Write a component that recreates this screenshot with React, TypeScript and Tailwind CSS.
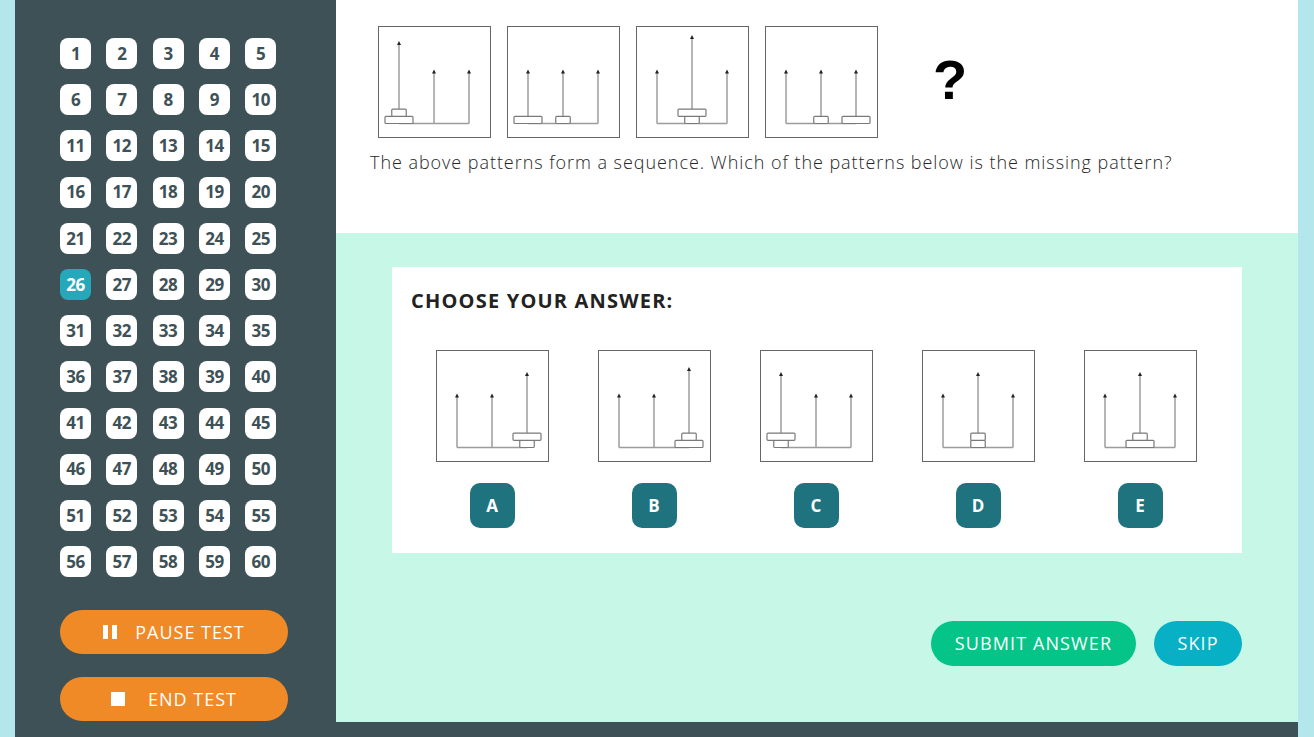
import React from 'react';

type Disk = { peg: number; big: boolean; level: number };
type Pattern = { tall: number | null; tallTop: number; disks: Disk[] };

const PEGS = [21, 56, 91];
const SHORT_TOP = 43.5;
const BASE = 97.5;

const sequence: Pattern[] = [
  { tall: 0, tallTop: 15, disks: [{ peg: 0, big: true, level: 0 }, { peg: 0, big: false, level: 1 }] },
  { tall: null, tallTop: 0, disks: [{ peg: 0, big: true, level: 0 }, { peg: 1, big: false, level: 0 }] },
  { tall: 1, tallTop: 9, disks: [{ peg: 1, big: false, level: 0 }, { peg: 1, big: true, level: 1 }] },
  { tall: null, tallTop: 0, disks: [{ peg: 1, big: false, level: 0 }, { peg: 2, big: true, level: 0 }] },
];

const answers: { label: string; pattern: Pattern }[] = [
  { label: 'A', pattern: { tall: 2, tallTop: 22, disks: [{ peg: 2, big: false, level: 0 }, { peg: 2, big: true, level: 1 }] } },
  { label: 'B', pattern: { tall: 2, tallTop: 17, disks: [{ peg: 2, big: true, level: 0 }, { peg: 2, big: false, level: 1 }] } },
  { label: 'C', pattern: { tall: 0, tallTop: 22, disks: [{ peg: 0, big: false, level: 0 }, { peg: 0, big: true, level: 1 }] } },
  { label: 'D', pattern: { tall: 1, tallTop: 22, disks: [{ peg: 1, big: false, level: 0 }, { peg: 1, big: false, level: 1 }] } },
  { label: 'E', pattern: { tall: 1, tallTop: 22, disks: [{ peg: 1, big: true, level: 0 }, { peg: 1, big: false, level: 1 }] } },
];

function PatternBox({ pattern }: { pattern: Pattern }) {
  return (
    <div className="w-[113px] h-[112px] border border-[#666] bg-white shrink-0">
      <svg width="111" height="110" viewBox="1 1 111 110">
        <line x1={PEGS[0]} y1={BASE} x2={PEGS[2]} y2={BASE} stroke="#9c9c9c" strokeWidth="1.5" />
        {PEGS.map((x, i) => {
          const top = pattern.tall === i ? pattern.tallTop : SHORT_TOP;
          return (
            <g key={i}>
              <line x1={x} y1={top + 2} x2={x} y2={BASE} stroke="#9c9c9c" strokeWidth="1.5" />
              <polygon points={`${x - 2},${top + 4} ${x},${top} ${x + 2},${top + 4}`} fill="#222" />
            </g>
          );
        })}
        {pattern.disks.map((d, i) => {
          const w = d.big ? 28 : 14.5;
          const x = PEGS[d.peg] - w / 2;
          const y = BASE - 7.2 * (d.level + 1);
          return <rect key={i} x={x} y={y} width={w} height={7.2} rx="1" fill="#fff" stroke="#7a7a7a" strokeWidth="1.2" />;
        })}
      </svg>
    </div>
  );
}

export default function App() {
  const numbers = Array.from({ length: 60 }, (_, i) => i + 1);

  return (
    <div className="w-full h-[737px] bg-[#b4e7ec] pl-[15px] pr-[16px] overflow-hidden" style={{ fontFamily: '"Open Sans", "Liberation Sans", sans-serif' }}>
      <div className="flex h-full bg-[#3e5156]">
        {/* Sidebar */}
        <aside className="w-[321px] shrink-0 pl-[45px] pt-[38px]">
          <div className="grid grid-cols-[repeat(5,31px)] gap-x-[15.3px] gap-y-[15.2px]">
            {numbers.map((n) => (
              <div
                key={n}
                className={`w-[31px] h-[31px] rounded-[8px] flex items-center justify-center text-[17px] font-bold tracking-[-0.5px] ${
                  n === 26 ? 'bg-[#25a8b9] text-white' : 'bg-white text-[#3e5156]'
                }`}
              >
                {n}
              </div>
            ))}
          </div>

          <div className="mt-[33px] flex flex-col gap-[23px]">
            <button className="w-[228px] h-[44px] rounded-full bg-[#f08a26] text-white text-[18px] tracking-[1px] flex items-center justify-center gap-[18px]">
              <span className="flex gap-[4px]">
                <span className="w-[5px] h-[14px] bg-white" />
                <span className="w-[5px] h-[14px] bg-white" />
              </span>
              PAUSE TEST
            </button>
            <button className="w-[228px] h-[44px] rounded-full bg-[#f08a26] text-white text-[18px] tracking-[1px] flex items-center justify-center gap-[23px]">
              <span className="w-[14px] h-[14px] bg-white" />
              END TEST
            </button>
          </div>
        </aside>

        {/* Main */}
        <main className="flex-1 h-[722px] flex flex-col">
          <section className="h-[233px] bg-white pl-[34px] pt-[26px]">
            <div className="flex items-center gap-[16px] ml-[8px]">
              {sequence.map((p, i) => (
                <PatternBox key={i} pattern={p} />
              ))}
              <span className="ml-[39px] -mt-[4px] text-[56px] font-bold text-black leading-none" style={{ fontFamily: '"Liberation Sans", Arial, sans-serif' }}>
                ?
              </span>
            </div>
            <p className="mt-[11px] text-[18px] tracking-[0.95px] text-[#262626] font-light">
              The above patterns form a sequence. Which of the patterns below is the missing pattern?
            </p>
          </section>

          <section className="flex-1 bg-[#c7f7e7] px-[56px] pt-[34px]">
            <div className="bg-white h-[286px] px-[19px] pt-[19px]">
              <h2 className="text-[20px] font-bold text-[#222] tracking-[1.2px]">CHOOSE YOUR ANSWER:</h2>
              <div className="mt-[34px] flex justify-center gap-[49px] -ml-[2px]">
                {answers.map((a) => (
                  <div key={a.label} className="flex flex-col items-center">
                    <PatternBox pattern={a.pattern} />
                    <button className="mt-[21px] w-[45px] h-[45px] rounded-[10px] bg-[#1e737f] text-white font-bold text-[17px]">
                      {a.label}
                    </button>
                  </div>
                ))}
              </div>
            </div>

            <div className="mt-[68px] flex justify-end gap-[18px]">
              <button className="w-[205px] h-[45px] rounded-full bg-[#05c487] text-white text-[18px] tracking-[1.1px]">SUBMIT ANSWER</button>
              <button className="w-[88px] h-[45px] rounded-full bg-[#08b0c5] text-white text-[18px] tracking-[1.1px]">SKIP</button>
            </div>
          </section>
        </main>
      </div>
    </div>
  );
}
